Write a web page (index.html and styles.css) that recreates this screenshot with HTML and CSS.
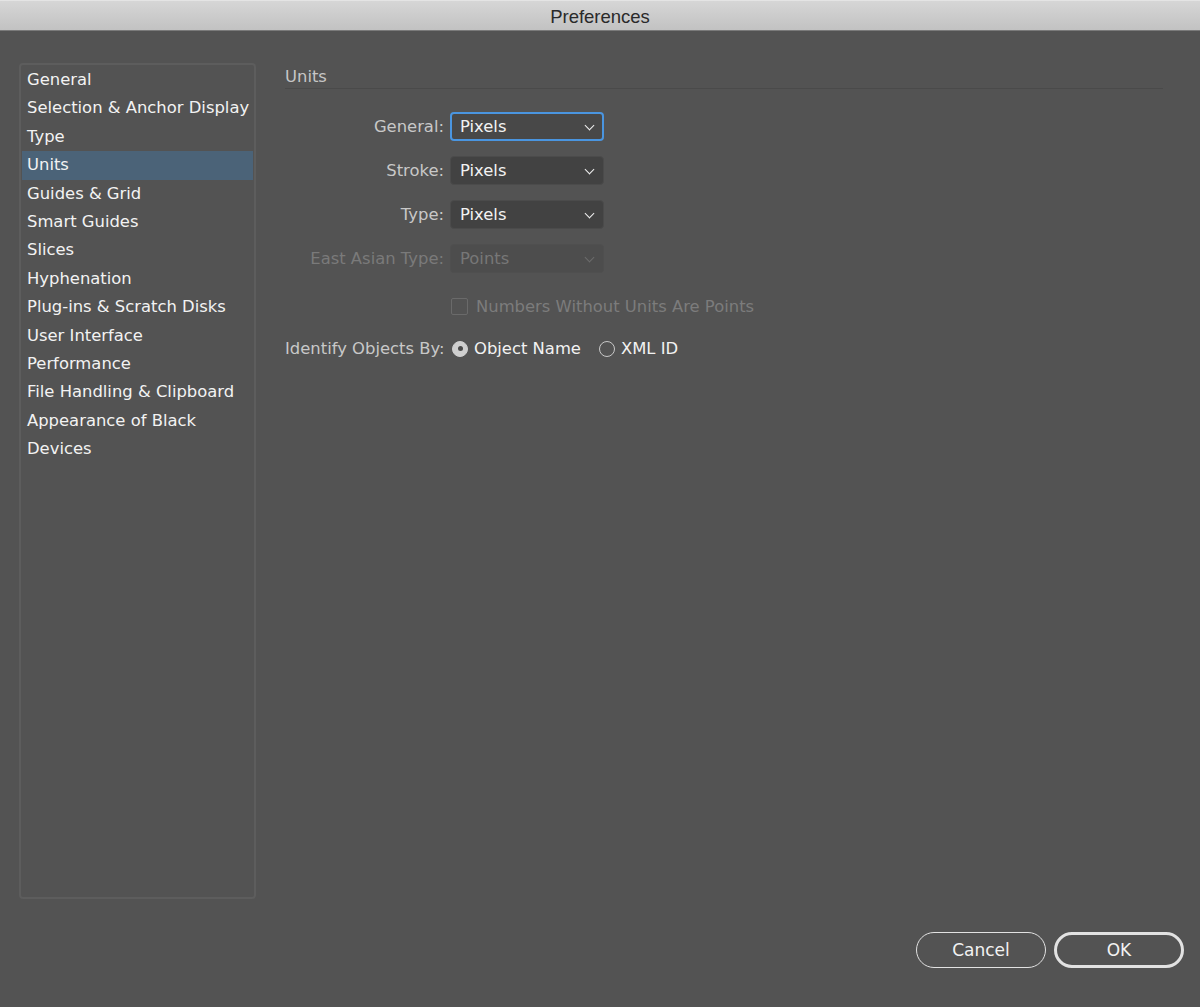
FILE: index.html
```html
<!DOCTYPE html>
<html lang="en">
<head>
    <meta charset="UTF-8">
    <meta name="viewport" content="width=device-width, initial-scale=1.0">
    <title>Preferences</title>
    <link rel="stylesheet" href="styles.css">
</head>
<body>
<div class="titlebar">Preferences</div>
<div class="window">
    <div class="panes">
        <ul class="sidebar">
            <li>General</li>
            <li>Selection &amp; Anchor Display</li>
            <li>Type</li>
            <li class="active">Units</li>
            <li>Guides &amp; Grid</li>
            <li>Smart Guides</li>
            <li>Slices</li>
            <li>Hyphenation</li>
            <li>Plug-ins &amp; Scratch Disks</li>
            <li>User Interface</li>
            <li>Performance</li>
            <li>File Handling &amp; Clipboard</li>
            <li>Appearance of Black</li>
            <li>Devices</li>
        </ul>
        <div class="main">
            <h2 class="section-title">Units</h2>
            <div class="form">
                <label class="field-label">General:</label>
                <div class="select focused">Pixels <span class="chevron"></span></div>

                <label class="field-label">Stroke:</label>
                <div class="select">Pixels <span class="chevron"></span></div>

                <label class="field-label">Type:</label>
                <div class="select">Pixels <span class="chevron"></span></div>

                <label class="field-label disabled">East Asian Type:</label>
                <div class="select disabled">Points <span class="chevron"></span></div>

                <div></div>
                <div class="check-row disabled">
                    <span class="checkbox"></span>
                    Numbers Without Units Are Points
                </div>

                <label class="field-label">Identify Objects By:</label>
                <div class="radio-row">
                    <span class="radio checked"></span>
                    <span>Object Name</span>
                    <span class="radio second"></span>
                    <span>XML ID</span>
                </div>
            </div>
        </div>
    </div>
    <div class="footer">
        <button class="btn">Cancel</button>
        <button class="btn primary">OK</button>
    </div>
</div>
</body>
</html>
```

FILE: styles.css
```css
html, body {
    margin: 0;
    padding: 0;
    height: 100%;
}

body {
    font-family: "DejaVu Sans", sans-serif;
    background-color: #535353;
    color: #f0f0f0;
    font-size: 16.4px;
    display: flex;
    flex-direction: column;
}

.titlebar {
    height: 31px;
    box-sizing: border-box;
    line-height: 31px;
    text-align: center;
    font-family: "Liberation Sans", Arial, sans-serif;
    font-size: 18.5px;
    color: #2a2a2a;
    background: linear-gradient(#d6d6d6, #c2c2c2);
    border-top: 1px solid #e4e4e4;
    border-bottom: 1px solid #7a7a7a;
}

.window {
    flex: 1;
    display: flex;
    flex-direction: column;
    padding: 32px 16px 39px 19px;
}

.panes {
    flex: 1;
    display: flex;
    gap: 29px;
}

/* left category list */
.sidebar {
    list-style: none;
    margin: 0;
    padding: 1px;
    width: 231px;
    border: 2px solid #5d5d5d;
    border-radius: 4px;
}

.sidebar li {
    height: 28.4px;
    line-height: 27.4px;
    padding-left: 5px;
    color: #f2f2f2;
    white-space: nowrap;
}

.sidebar li.active {
    background-color: #4b6378;
}

.main {
    flex: 1;
    margin-right: 21px;
}

.section-title {
    margin: 0;
    padding: 4px 0 1px 0;
    font-size: 16.4px;
    font-weight: normal;
    line-height: 20px;
    color: #c6c6c6;
    border-bottom: 1px solid #4a4a4a;
}

.form {
    display: grid;
    grid-template-columns: 159px auto;
    column-gap: 6px;
    row-gap: 15px;
    margin-top: 23px;
    align-items: center;
}

.field-label {
    text-align: right;
    color: #c8c8c8;
    white-space: nowrap;
}

.field-label.disabled {
    color: #7a7a7a;
}

.select {
    position: relative;
    width: 154px;
    height: 29px;
    box-sizing: border-box;
    padding-left: 9px;
    line-height: 27px;
    background-color: #424242;
    border: 1px solid #4b4b4b;
    border-radius: 4px;
    color: #f2f2f2;
}

.select.focused {
    background-color: #484848;
    border: 2px solid #4a95e0;
    padding-left: 8px;
    line-height: 25px;
}

.select.disabled {
    background-color: #4d4d4d;
    border-color: #4f4f4f;
    color: #777;
}

.chevron {
    position: absolute;
    right: 10px;
    top: 9px;
    width: 6px;
    height: 6px;
    border-right: 1.5px solid #f0f0f0;
    border-bottom: 1.5px solid #f0f0f0;
    transform: rotate(45deg);
}

.select.focused .chevron {
    right: 9px;
    top: 8px;
}

.select.disabled .chevron {
    border-color: #6c6c6c;
}

.check-row {
    display: flex;
    align-items: center;
    gap: 8px;
    height: 36px;
    color: #7c7c7c;
    white-space: nowrap;
}

.checkbox {
    width: 15px;
    height: 15px;
    margin-left: 1px;
    border: 1px solid #6a6a6a;
    border-radius: 2px;
}

.radio-row {
    display: flex;
    align-items: center;
    gap: 6px;
    color: #f2f2f2;
    white-space: nowrap;
}

.radio {
    width: 14px;
    height: 14px;
    margin-left: 2px;
    border: 1.5px solid #c8c8c8;
    border-radius: 50%;
    position: relative;
}

.radio.checked {
    background-color: #cfcfcf;
    border-color: #cfcfcf;
}

.radio.checked::after {
    content: "";
    position: absolute;
    left: 4.5px;
    top: 4.5px;
    width: 5px;
    height: 5px;
    border-radius: 50%;
    background-color: #4a4a4a;
}

.radio.second {
    margin-left: 12px;
}

.footer {
    display: flex;
    justify-content: flex-end;
    gap: 8px;
    margin-top: 33px;
}

.btn {
    width: 130px;
    height: 36px;
    box-sizing: border-box;
    background: transparent;
    border: 1.5px solid #e2e2e2;
    border-radius: 18px;
    color: #f2f2f2;
    font-family: "DejaVu Sans", sans-serif;
    font-size: 17px;
    padding: 0;
}

.btn.primary {
    border-width: 3px;
}
```
